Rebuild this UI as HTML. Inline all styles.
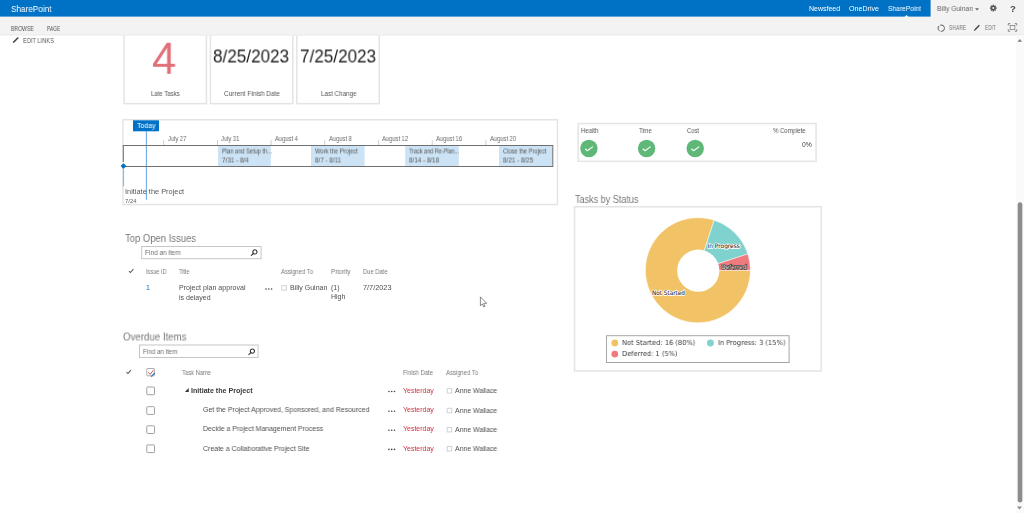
<!DOCTYPE html>
<html lang="en"><head><meta charset="utf-8"><title>SharePoint</title>
<style>
html,body{margin:0;padding:0;background:#fff;}
body{width:1024px;height:513px;overflow:hidden;position:relative;font-family:"Liberation Sans",sans-serif;}
.b{position:absolute;box-sizing:border-box;}
.t{position:absolute;white-space:nowrap;line-height:1;margin:0;padding:0;will-change:transform;}
svg{position:absolute;overflow:visible;}
</style></head><body>
<svg style="left:0;top:0" width="1024" height="513" viewBox="0 0 1024 513">
<rect x="124.05" y="30.75" width="82.4" height="72.9" fill="#fff" stroke="#e4e4e4" stroke-width="1.5"/>
<rect x="210.45" y="30.75" width="82.4" height="72.9" fill="#fff" stroke="#e4e4e4" stroke-width="1.5"/>
<rect x="296.85" y="30.75" width="82.4" height="72.9" fill="#fff" stroke="#e4e4e4" stroke-width="1.5"/>
<rect x="0" y="16" width="1024" height="19.55" fill="#f3f3f3"/>
<rect x="0" y="34.1" width="1024" height="1.45" fill="#eeeeee"/>
<rect x="0" y="0" width="1024" height="16.6" fill="#0072c6"/>
<rect x="930.6" y="0" width="93.4" height="17" fill="#f3f3f3"/>
<svg x="904.4" y="14.9" overflow="visible" width="4.2" height="2" viewBox="0 0 5 2.4"><path d="M0 2.4 L2.5 0 L5 2.4Z" fill="#f3f3f3"/></svg>
<svg x="975" y="8.2" overflow="visible" width="4" height="2.2" viewBox="0 0 4 2.2"><path d="M0 0H4L2 2.2Z" fill="#666"/></svg>
<svg x="989.8" y="4.6" overflow="visible" width="7" height="7" viewBox="-4.5 -4.5 9 9"><g fill="#555"><circle r="2.9"/><rect x="-1" y="-4.3" width="2" height="8.6" transform="rotate(0)"/><rect x="-1" y="-4.3" width="2" height="8.6" transform="rotate(45)"/><rect x="-1" y="-4.3" width="2" height="8.6" transform="rotate(90)"/><rect x="-1" y="-4.3" width="2" height="8.6" transform="rotate(135)"/></g><circle r="1.3" fill="#f3f3f3"/></svg>
<svg x="937.3" y="24.2" overflow="visible" width="8" height="8" viewBox="0 0 8 8"><circle cx="4" cy="4" r="3.2" fill="none" stroke="#5a5a5a" stroke-width="1" stroke-dasharray="5.6 1.1"/></svg>
<svg x="973.6" y="24.2" overflow="visible" width="7" height="7" viewBox="0 0 7 7"><path d="M0.3 6.7 L0.9 5 L5.3 0.6 L6.3 1.6 L1.9 6.1Z" fill="#444"/></svg>
<svg x="1007.8" y="23.1" overflow="visible" width="9.4" height="8.6" viewBox="0 0 10 9" fill="none" stroke="#666" stroke-width="0.85"><rect x="2.5" y="2.4" width="5" height="4.2" stroke="#7a7a7a" stroke-width="0.8"/><path d="M0.5 2.4V0.5H2.6 M7.4 0.5H9.5V2.4 M9.5 6.6V8.5H7.4 M2.6 8.5H0.5V6.6"/></svg>
<svg x="12.5" y="36.3" overflow="visible" width="7" height="7" viewBox="0 0 7 7"><path d="M0.3 6.7 L0.9 5 L5.3 0.6 L6.3 1.6 L1.9 6.1Z" fill="#444"/></svg>
<rect x="1016" y="35" width="8" height="478" fill="#fafafa"/>
<svg x="1017.5" y="38.9" overflow="visible" width="4.6" height="2.8" viewBox="0 0 5 3"><path d="M0 3H5L2.5 0Z" fill="#7c7c7c"/></svg>
<svg x="1017" y="506.5" overflow="visible" width="5" height="3" viewBox="0 0 5 3"><path d="M0 0H5L2.5 3Z" fill="#8a8a8a"/></svg>
<rect x="1017.7" y="202.3" width="4.6" height="300.2" rx="2.3" fill="#8c8c8c"/>
<rect x="122.95" y="119.75" width="434.5" height="84.8" fill="#fff" stroke="#e4e4e4" stroke-width="1.5"/>
<rect x="133" y="120.3" width="26" height="11" fill="#0072c6"/>
<rect x="145.9" y="131" width="0.8" height="68.8" fill="#3a8fd6"/>
<rect x="163.3" y="140.2" width="0.8" height="5.3" fill="#c4c4c4"/>
<rect x="217" y="140.2" width="0.8" height="5.3" fill="#c4c4c4"/>
<rect x="270.7" y="140.2" width="0.8" height="5.3" fill="#c4c4c4"/>
<rect x="324.4" y="140.2" width="0.8" height="5.3" fill="#c4c4c4"/>
<rect x="378.1" y="140.2" width="0.8" height="5.3" fill="#c4c4c4"/>
<rect x="431.8" y="140.2" width="0.8" height="5.3" fill="#c4c4c4"/>
<rect x="485.5" y="140.2" width="0.8" height="5.3" fill="#c4c4c4"/>
<rect x="218" y="146" width="52.8" height="20" fill="#cce3f5"/>
<rect x="311" y="146" width="53.6" height="20" fill="#cce3f5"/>
<rect x="405.2" y="146" width="53.6" height="20" fill="#cce3f5"/>
<rect x="499" y="146" width="53.8" height="20" fill="#cce3f5"/>
<rect x="123.3" y="145.5" width="429.5" height="21" fill="none" stroke="#707070" stroke-width="1"/>
<rect x="122.5" y="162" width="1.8" height="5" fill="#fff"/>
<svg x="120" y="162.6" overflow="visible" width="7" height="7" viewBox="0 0 7 7"><path d="M3.5 0.6L6.4 3.5L3.5 6.4L0.6 3.5Z" fill="#0072c6"/></svg>
<rect x="122.9" y="169.3" width="1.2" height="17" fill="#86bce9"/>
<rect x="578.15" y="123.55" width="237.9" height="37.8" fill="#fff" stroke="#e4e4e4" stroke-width="1.5"/>
<svg x="579.9" y="139.5" overflow="visible" width="18" height="18" viewBox="-9 -9 18 18"><circle r="8.7" fill="#5fb878"/><path d="M-3.5 0.5L-1.5 2.2L3.6 -1.6" fill="none" stroke="#fff" stroke-width="1.15" stroke-linecap="round" stroke-linejoin="round"/></svg>
<svg x="637.6" y="139.5" overflow="visible" width="18" height="18" viewBox="-9 -9 18 18"><circle r="8.7" fill="#5fb878"/><path d="M-3.5 0.5L-1.5 2.2L3.6 -1.6" fill="none" stroke="#fff" stroke-width="1.15" stroke-linecap="round" stroke-linejoin="round"/></svg>
<svg x="686.2" y="139.5" overflow="visible" width="18" height="18" viewBox="-9 -9 18 18"><circle r="8.7" fill="#5fb878"/><path d="M-3.5 0.5L-1.5 2.2L3.6 -1.6" fill="none" stroke="#fff" stroke-width="1.15" stroke-linecap="round" stroke-linejoin="round"/></svg>
<rect x="574.55" y="206.75" width="246.7" height="164.3" fill="#fff" stroke="#e4e4e4" stroke-width="1.5"/>
<svg x="0" y="0" overflow="visible" width="1024" height="513" viewBox="0 0 1024 513"><g stroke="#fff" stroke-width="0.5" stroke-linejoin="round"><path d="M697.9 270.2L714.12 220.27A52.5 52.5 0 1 0 750.40 270.20Z" fill="#f1c366"/><path d="M697.9 270.2L747.83 253.98A52.5 52.5 0 0 0 714.12 220.27Z" fill="#7fd2cd"/><path d="M697.9 270.2L750.40 270.20A52.5 52.5 0 0 0 747.83 253.98Z" fill="#ee7b7e"/></g><circle cx="698.25" cy="270.65" r="21.1" fill="#fff"/><g font-family='"DejaVu Sans", sans-serif' font-size="6.1" fill="#0a0a0a" stroke="#fff" stroke-width="1.7" stroke-linejoin="round" paint-order="stroke"><text x="707.6" y="248" textLength="32.2" lengthAdjust="spacingAndGlyphs">In Progress</text><text x="652" y="295.1" textLength="33" lengthAdjust="spacingAndGlyphs">Not Started</text></g><g font-family='"DejaVu Sans", sans-serif' font-size="6.1" fill="#eef" stroke="#222" stroke-width="1.1" stroke-linejoin="round" paint-order="stroke"><text x="721.2" y="268.6" textLength="25.4" lengthAdjust="spacingAndGlyphs">Deferred</text></g></svg>
<rect x="606.5" y="335.7" width="182.6" height="26.8" fill="#fff" stroke="#a6a6a6" stroke-width="1"/>
<svg x="610.8" y="339" overflow="visible" width="8" height="8" viewBox="-4 -4 8 8"><circle r="3.4" fill="#f1c366"/></svg>
<svg x="706.4" y="339" overflow="visible" width="8" height="8" viewBox="-4 -4 8 8"><circle r="3.4" fill="#7fd2cd"/></svg>
<svg x="610.8" y="350.1" overflow="visible" width="8" height="8" viewBox="-4 -4 8 8"><circle r="3.4" fill="#ee7b7e"/></svg>
<rect x="141.7" y="246.5" width="119.4" height="12.2" fill="#fff" stroke="#c6c6c6" stroke-width="1"/>
<svg x="250.8" y="249" overflow="visible" width="7" height="7" viewBox="0 0 7 7" fill="none" stroke="#333" stroke-width="1.05"><circle cx="4.1" cy="2.9" r="2.1"/><path d="M2.6 4.4L0.6 6.4" stroke-linecap="round"/></svg>
<svg x="128.5" y="268.3" overflow="visible" width="6" height="6" viewBox="0 0 6 6"><path d="M0.5 2.9L1.9 4.3L4.9 0.9" fill="none" stroke="#5c5c5c" stroke-width="1.05"/></svg>
<svg x="265" y="288" overflow="visible" width="8" height="2" viewBox="0 0 8 2"><circle cx="1" cy="1" r="0.8" fill="#444"/><circle cx="3.8" cy="1" r="0.8" fill="#444"/><circle cx="6.6" cy="1" r="0.8" fill="#444"/></svg>
<rect x="281.9" y="285.7" width="4.5" height="4.5" fill="#fff" stroke="#d2d2d2" stroke-width="1"/>
<svg x="0" y="0" overflow="visible" width="1024" height="513" viewBox="0 0 1024 513"><path d="M480.4 296.9V305.6L482.3 303.9L483.7 306.9L485 306.3L483.7 303.4L486.7 303.3Z" fill="#fff" stroke="#4a4a4a" stroke-width="0.65" stroke-linejoin="round"/></svg>
<rect x="139.5" y="345" width="118.6" height="12.5" fill="#fff" stroke="#c6c6c6" stroke-width="1"/>
<svg x="248.3" y="348.2" overflow="visible" width="7" height="7" viewBox="0 0 7 7" fill="none" stroke="#333" stroke-width="1.05"><circle cx="4.1" cy="2.9" r="2.1"/><path d="M2.6 4.4L0.6 6.4" stroke-linecap="round"/></svg>
<svg x="126" y="369.3" overflow="visible" width="6" height="6" viewBox="0 0 6 6"><path d="M0.5 2.9L1.9 4.3L4.9 0.9" fill="none" stroke="#5c5c5c" stroke-width="1.05"/></svg>
<svg x="146" y="368" overflow="visible" width="10" height="10" viewBox="0 0 10 10"><rect x="0.8" y="0.5" width="7.6" height="7.3" rx="0.6" fill="#fff" stroke="#999" stroke-width="0.8"/><path d="M2.4 4.4L4.2 6.4L7.4 2.2" fill="none" stroke="#d9534f" stroke-width="1"/><path d="M5.2 8.6L8.8 5" stroke="#2a6ebb" stroke-width="1.1"/></svg>
<rect x="146.8" y="387" width="7.7" height="7.7" rx="0.7" fill="#fff" stroke="#a2a2a2" stroke-width="1"/>
<svg x="387.9" y="390.5" overflow="visible" width="8" height="2" viewBox="0 0 8 2"><circle cx="1" cy="1" r="0.8" fill="#444"/><circle cx="3.8" cy="1" r="0.8" fill="#444"/><circle cx="6.6" cy="1" r="0.8" fill="#444"/></svg>
<rect x="447.2" y="388.6" width="4.5" height="4.5" fill="#fff" stroke="#d2d2d2" stroke-width="1"/>
<rect x="146.8" y="406.7" width="7.7" height="7.7" rx="0.7" fill="#fff" stroke="#a2a2a2" stroke-width="1"/>
<svg x="387.9" y="410.20000000000005" overflow="visible" width="8" height="2" viewBox="0 0 8 2"><circle cx="1" cy="1" r="0.8" fill="#444"/><circle cx="3.8" cy="1" r="0.8" fill="#444"/><circle cx="6.6" cy="1" r="0.8" fill="#444"/></svg>
<rect x="447.2" y="408.3" width="4.5" height="4.5" fill="#fff" stroke="#d2d2d2" stroke-width="1"/>
<rect x="146.8" y="425.8" width="7.7" height="7.7" rx="0.7" fill="#fff" stroke="#a2a2a2" stroke-width="1"/>
<svg x="387.9" y="429.3" overflow="visible" width="8" height="2" viewBox="0 0 8 2"><circle cx="1" cy="1" r="0.8" fill="#444"/><circle cx="3.8" cy="1" r="0.8" fill="#444"/><circle cx="6.6" cy="1" r="0.8" fill="#444"/></svg>
<rect x="447.2" y="427.4" width="4.5" height="4.5" fill="#fff" stroke="#d2d2d2" stroke-width="1"/>
<rect x="146.8" y="444.9" width="7.7" height="7.7" rx="0.7" fill="#fff" stroke="#a2a2a2" stroke-width="1"/>
<svg x="387.9" y="448.40000000000003" overflow="visible" width="8" height="2" viewBox="0 0 8 2"><circle cx="1" cy="1" r="0.8" fill="#444"/><circle cx="3.8" cy="1" r="0.8" fill="#444"/><circle cx="6.6" cy="1" r="0.8" fill="#444"/></svg>
<rect x="447.2" y="446.5" width="4.5" height="4.5" fill="#fff" stroke="#d2d2d2" stroke-width="1"/>
<svg x="184.7" y="387.9" overflow="visible" width="4.4" height="4.4" viewBox="0 0 4 4"><path d="M3.7 0.2V3.7H0.2Z" fill="#333"/></svg>
</svg>
<span class="t" id="t0" style="top:4.82px;font-size:9.3px;color:#fff;left:10.70px;transform:scaleX(0.880);transform-origin:0 50%;">SharePoint</span>
<span class="t" id="t1" style="top:5.47px;font-size:7px;color:#fff;left:808.50px;transform:scaleX(0.995);transform-origin:0 50%;">Newsfeed</span>
<span class="t" id="t2" style="top:5.47px;font-size:7px;color:#fff;left:848.50px;transform:scaleX(1.014);transform-origin:0 50%;">OneDrive</span>
<span class="t" id="t3" style="top:5.47px;font-size:7px;color:#fff;left:888.00px;transform:scaleX(0.953);transform-origin:0 50%;">SharePoint</span>
<span class="t" id="t4" style="top:5.47px;font-size:7px;color:#666;left:937.00px;transform:scaleX(0.964);transform-origin:0 50%;">Billy Guinan</span>
<span class="t" id="t5" style="top:4.11px;font-size:9.5px;color:#4a4a4a;left:1010.10px;font-weight:700;">?</span>
<span class="t" id="t6" style="top:26.07px;font-size:6.4px;color:#555;left:10.90px;transform:scaleX(0.803);transform-origin:0 50%;">BROWSE</span>
<span class="t" id="t7" style="top:26.07px;font-size:6.4px;color:#555;left:46.80px;transform:scaleX(0.769);transform-origin:0 50%;">PAGE</span>
<span class="t" id="t8" style="top:24.97px;font-size:6.4px;color:#787878;left:948.60px;transform:scaleX(0.781);transform-origin:0 50%;">SHARE</span>
<span class="t" id="t9" style="top:24.97px;font-size:6.4px;color:#787878;left:985.00px;transform:scaleX(0.742);transform-origin:0 50%;">EDIT</span>
<span class="t" id="t10" style="top:36.99px;font-size:7.4px;color:#555;left:23.00px;transform:scaleX(0.768);transform-origin:0 50%;">EDIT LINKS</span>
<span class="t" id="t11" style="top:36.06px;font-size:44.5px;color:#e0707a;left:152.40px;transform:translateY(0.8px) scaleX(0.980);transform-origin:0 50%;">4</span>
<span class="t" id="t12" style="top:48.44px;font-size:17.6px;color:#222;left:213.30px;transform:translateY(0.5px) scaleX(0.971);transform-origin:0 50%;">8/25/2023</span>
<span class="t" id="t13" style="top:48.44px;font-size:17.6px;color:#222;left:299.90px;transform:translateY(0.5px) scaleX(0.971);transform-origin:0 50%;">7/25/2023</span>
<span class="t" id="t14" style="top:91.22px;font-size:6.5px;color:#555;left:151.10px;transform:scaleX(0.924);transform-origin:0 50%;">Late Tasks</span>
<span class="t" id="t15" style="top:91.22px;font-size:6.5px;color:#555;left:223.80px;transform:scaleX(0.990);transform-origin:0 50%;">Current Finish Date</span>
<span class="t" id="t16" style="top:91.22px;font-size:6.5px;color:#555;left:320.50px;transform:scaleX(0.963);transform-origin:0 50%;">Last Change</span>
<span class="t" id="t17" style="top:122.07px;font-size:7.2px;color:#fff;left:136.80px;transform:scaleX(0.969);transform-origin:0 50%;">Today</span>
<span class="t" id="t18" style="top:136.02px;font-size:6.5px;color:#6a6a6a;left:167.60px;transform:scaleX(0.890);transform-origin:0 50%;">July 27</span>
<span class="t" id="t19" style="top:136.02px;font-size:6.5px;color:#6a6a6a;left:221.30px;transform:scaleX(0.890);transform-origin:0 50%;">July 31</span>
<span class="t" id="t20" style="top:136.02px;font-size:6.5px;color:#6a6a6a;left:275.00px;transform:scaleX(0.890);transform-origin:0 50%;">August 4</span>
<span class="t" id="t21" style="top:136.02px;font-size:6.5px;color:#6a6a6a;left:328.70px;transform:scaleX(0.890);transform-origin:0 50%;">August 8</span>
<span class="t" id="t22" style="top:136.02px;font-size:6.5px;color:#6a6a6a;left:382.40px;transform:scaleX(0.890);transform-origin:0 50%;">August 12</span>
<span class="t" id="t23" style="top:136.02px;font-size:6.5px;color:#6a6a6a;left:436.10px;transform:scaleX(0.890);transform-origin:0 50%;">August 16</span>
<span class="t" id="t24" style="top:136.02px;font-size:6.5px;color:#6a6a6a;left:489.80px;transform:scaleX(0.890);transform-origin:0 50%;">August 20</span>
<span class="t" id="t25" style="top:148.42px;font-size:6.5px;color:#555;left:221.50px;transform:translateY(0.5px) scaleX(0.876);transform-origin:0 50%;">Plan and Setup th...</span>
<span class="t" id="t26" style="top:157.12px;font-size:6.5px;color:#555;left:221.50px;transform:translateY(0.5px) scaleX(0.970);transform-origin:0 50%;">7/31 - 8/4</span>
<span class="t" id="t27" style="top:148.42px;font-size:6.5px;color:#555;left:314.50px;transform:translateY(0.5px) scaleX(0.893);transform-origin:0 50%;">Work the Project</span>
<span class="t" id="t28" style="top:157.12px;font-size:6.5px;color:#555;left:314.50px;transform:translateY(0.5px) scaleX(0.970);transform-origin:0 50%;">8/7 - 8/11</span>
<span class="t" id="t29" style="top:148.42px;font-size:6.5px;color:#555;left:408.70px;transform:translateY(0.5px) scaleX(0.845);transform-origin:0 50%;">Track and Re-Plan...</span>
<span class="t" id="t30" style="top:157.12px;font-size:6.5px;color:#555;left:408.70px;transform:translateY(0.5px) scaleX(0.970);transform-origin:0 50%;">8/14 - 8/18</span>
<span class="t" id="t31" style="top:148.42px;font-size:6.5px;color:#555;left:502.50px;transform:translateY(0.5px) scaleX(0.877);transform-origin:0 50%;">Close the Project</span>
<span class="t" id="t32" style="top:157.12px;font-size:6.5px;color:#555;left:502.50px;transform:translateY(0.5px) scaleX(0.970);transform-origin:0 50%;">8/21 - 8/25</span>
<span class="t" id="t33" style="top:187.56px;font-size:7.4px;color:#585858;left:125.00px;">Initiate the Project</span>
<span class="t" id="t34" style="top:198.77px;font-size:5.8px;color:#666;left:125.00px;transform:scaleX(1.027);transform-origin:0 50%;">7/24</span>
<span class="t" id="t35" style="top:128.10px;font-size:6.4px;color:#555;left:581.30px;transform:scaleX(0.947);transform-origin:0 50%;">Health</span>
<span class="t" id="t36" style="top:128.10px;font-size:6.4px;color:#555;left:638.50px;transform:scaleX(0.895);transform-origin:0 50%;">Time</span>
<span class="t" id="t37" style="top:128.10px;font-size:6.4px;color:#555;left:686.90px;transform:scaleX(0.913);transform-origin:0 50%;">Cost</span>
<span class="t" id="t38" style="top:128.10px;font-size:6.4px;color:#555;left:773.30px;transform:scaleX(0.934);transform-origin:0 50%;">% Complete</span>
<span class="t" id="t39" style="top:141.98px;font-size:6.8px;color:#444;left:802.00px;transform:scaleX(0.977);transform-origin:0 50%;">0%</span>
<span class="t" id="t40" style="top:194.73px;font-size:10.2px;color:#787878;left:575.00px;transform:scaleX(0.890);transform-origin:0 50%;">Tasks by Status</span>
<span class="t" id="t41" style="top:339.78px;font-size:7px;color:#3a3a3a;left:621.90px;font-family:'DejaVu Sans', sans-serif;transform:scaleX(0.951);transform-origin:0 50%;">Not Started: 16 (80%)</span>
<span class="t" id="t42" style="top:339.78px;font-size:7px;color:#3a3a3a;left:717.80px;font-family:'DejaVu Sans', sans-serif;transform:scaleX(0.951);transform-origin:0 50%;">In Progress: 3 (15%)</span>
<span class="t" id="t43" style="top:350.88px;font-size:7px;color:#3a3a3a;left:621.90px;font-family:'DejaVu Sans', sans-serif;transform:scaleX(0.948);transform-origin:0 50%;">Deferred: 1 (5%)</span>
<span class="t" id="t44" style="top:234.03px;font-size:10.2px;color:#787878;left:125.20px;transform:scaleX(0.929);transform-origin:0 50%;">Top Open Issues</span>
<span class="t" id="t45" style="top:250.29px;font-size:6.6px;color:#6e6e6e;left:145.20px;transform:scaleX(0.984);transform-origin:0 50%;">Find an item</span>
<span class="t" id="t46" style="top:268.99px;font-size:6.6px;color:#7a7a7a;left:145.70px;transform:scaleX(0.848);transform-origin:0 50%;">Issue ID</span>
<span class="t" id="t47" style="top:268.99px;font-size:6.6px;color:#7a7a7a;left:178.90px;transform:scaleX(0.859);transform-origin:0 50%;">Title</span>
<span class="t" id="t48" style="top:268.99px;font-size:6.6px;color:#7a7a7a;left:281.40px;transform:scaleX(0.894);transform-origin:0 50%;">Assigned To</span>
<span class="t" id="t49" style="top:268.99px;font-size:6.6px;color:#7a7a7a;left:331.20px;transform:scaleX(0.950);transform-origin:0 50%;">Priority</span>
<span class="t" id="t50" style="top:268.99px;font-size:6.6px;color:#7a7a7a;left:363.40px;transform:scaleX(0.879);transform-origin:0 50%;">Due Date</span>
<span class="t" id="t51" style="top:283.97px;font-size:7px;color:#0072c6;left:146.40px;">1</span>
<span class="t" id="t52" style="top:284.07px;font-size:7px;color:#4e4e4e;left:178.90px;transform:scaleX(1.011);transform-origin:0 50%;">Project plan approval</span>
<span class="t" id="t53" style="top:293.67px;font-size:7px;color:#4e4e4e;left:178.90px;">is delayed</span>
<span class="t" id="t54" style="top:283.77px;font-size:7px;color:#4e4e4e;left:289.60px;transform:scaleX(0.996);transform-origin:0 50%;">Billy Guinan</span>
<span class="t" id="t55" style="top:283.77px;font-size:7px;color:#4e4e4e;left:331.20px;transform:scaleX(1.004);transform-origin:0 50%;">(1)</span>
<span class="t" id="t56" style="top:293.07px;font-size:7px;color:#4e4e4e;left:331.20px;transform:scaleX(0.972);transform-origin:0 50%;">High</span>
<span class="t" id="t57" style="top:283.77px;font-size:7px;color:#4e4e4e;left:363.40px;transform:scaleX(1.046);transform-origin:0 50%;">7/7/2023</span>
<span class="t" id="t58" style="top:332.03px;font-size:10.2px;color:#787878;left:122.60px;transform:translateY(0.5px) scaleX(0.950);transform-origin:0 50%;">Overdue Items</span>
<span class="t" id="t59" style="top:349.29px;font-size:6.6px;color:#6e6e6e;left:142.80px;transform:scaleX(0.950);transform-origin:0 50%;">Find an item</span>
<span class="t" id="t60" style="top:370.49px;font-size:6.6px;color:#7a7a7a;left:182.30px;transform:scaleX(0.879);transform-origin:0 50%;">Task Name</span>
<span class="t" id="t61" style="top:370.49px;font-size:6.6px;color:#7a7a7a;left:403.30px;transform:scaleX(0.899);transform-origin:0 50%;">Finish Date</span>
<span class="t" id="t62" style="top:370.49px;font-size:6.6px;color:#7a7a7a;left:445.50px;transform:scaleX(0.894);transform-origin:0 50%;">Assigned To</span>
<span class="t" id="t63" style="top:386.97px;font-size:7px;color:#383838;left:191.30px;font-weight:700;transform:scaleX(1.015);transform-origin:0 50%;">Initiate the Project</span>
<span class="t" id="t64" style="top:386.67px;font-size:7px;color:#cc3340;left:403.30px;">Yesterday</span>
<span class="t" id="t65" style="top:386.87px;font-size:7px;color:#4e4e4e;left:454.60px;transform:scaleX(0.983);transform-origin:0 50%;">Anne Wallace</span>
<span class="t" id="t66" style="top:405.77px;font-size:7px;color:#4e4e4e;left:202.70px;transform:scaleX(0.995);transform-origin:0 50%;">Get the Project Approved, Sponsored, and Resourced</span>
<span class="t" id="t67" style="top:406.37px;font-size:7px;color:#cc3340;left:403.30px;">Yesterday</span>
<span class="t" id="t68" style="top:406.57px;font-size:7px;color:#4e4e4e;left:454.60px;transform:scaleX(0.983);transform-origin:0 50%;">Anne Wallace</span>
<span class="t" id="t69" style="top:424.87px;font-size:7px;color:#4e4e4e;left:202.70px;transform:scaleX(0.988);transform-origin:0 50%;">Decide a Project Management Process</span>
<span class="t" id="t70" style="top:425.47px;font-size:7px;color:#cc3340;left:403.30px;">Yesterday</span>
<span class="t" id="t71" style="top:425.67px;font-size:7px;color:#4e4e4e;left:454.60px;transform:scaleX(0.983);transform-origin:0 50%;">Anne Wallace</span>
<span class="t" id="t72" style="top:444.87px;font-size:7px;color:#4e4e4e;left:202.70px;transform:scaleX(0.992);transform-origin:0 50%;">Create a Collaborative Project Site</span>
<span class="t" id="t73" style="top:444.57px;font-size:7px;color:#cc3340;left:403.30px;">Yesterday</span>
<span class="t" id="t74" style="top:444.77px;font-size:7px;color:#4e4e4e;left:454.60px;transform:scaleX(0.983);transform-origin:0 50%;">Anne Wallace</span>
</body></html>
